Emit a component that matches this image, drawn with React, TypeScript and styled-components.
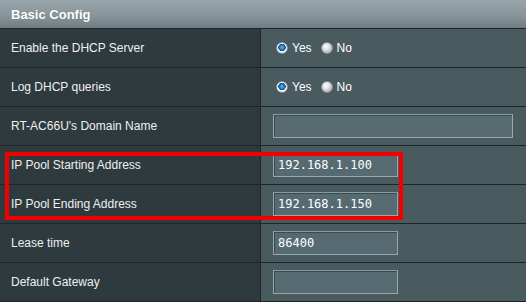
import React from "react";
import styled, { createGlobalStyle } from "styled-components";

const Global = createGlobalStyle`
  html, body { margin: 0; padding: 0; background: #4a5b60; }
  body { width: 526px; height: 302px; overflow: hidden; }
`;

const Panel = styled.div`
  position: relative;
  width: 526px;
  font-family: Arial, "Liberation Sans", sans-serif;
`;

const Header = styled.div`
  height: 28px;
  border-bottom: 1px solid #1c2326;
  background: linear-gradient(to bottom, #97a4a9 0%, #8a979c 50%, #6f7d82 100%);
  display: flex;
  align-items: center;
  padding-left: 11px;
  color: #ffffff;
  font-weight: bold;
  font-size: 13px;
  text-shadow: 0 0 1px rgba(0,0,0,0.25);
`;

const Row = styled.div`
  display: grid;
  grid-template-columns: 261px 1fr;
  height: 38px;
  border-bottom: 1px solid #1e2528;
`;

const Label = styled.div`
  background: #2f3a3e;
  border-right: 1px solid #1e2528;
  display: flex;
  align-items: center;
  padding-left: 11px;
  color: #eef0f0;
  font-size: 12px;
`;

const Field = styled.div<{ $pad?: number }>`
  background: #4a5b60;
  display: flex;
  align-items: center;
  padding-left: ${(p) => p.$pad ?? 12}px;
  color: #ffffff;
  font-size: 12px;
`;

const RadioOpt = styled.label`
  display: flex;
  align-items: center;
  gap: 4px;
  margin-right: 9px;
`;

const RadioDot = styled.span<{ $on?: boolean }>`
  width: 12px;
  height: 12px;
  border-radius: 50%;
  box-sizing: border-box;
  border: 1px solid #8a9599;
  background: ${(p) =>
    p.$on
      ? "radial-gradient(circle at 50% 45%, #5fb8ef 0, #1a75b8 2.5px, #0d4f86 3.5px, #ffffff 4px, #e9eef0 5px)"
      : "radial-gradient(circle at 40% 35%, #ffffff 0, #e4e6e7 3px, #b9bdbf 6px)"};
  box-shadow: 0 0 1px rgba(0,0,0,0.4);
`;

const TextBox = styled.div<{ $w: number }>`
  width: ${(p) => p.$w}px;
  height: 24px;
  box-sizing: border-box;
  background: #566b71;
  border: 1px solid #9aa8ac;
  border-top-color: #8d9b9f;
  box-shadow: inset 1px 1px 0 #3b4a4f;
  display: flex;
  align-items: center;
  padding-left: 4px;
  font-family: "DejaVu Sans Mono", "Liberation Mono", monospace;
  font-size: 12px;
  color: #ffffff;
`;

const Highlight = styled.div`
  position: absolute;
  left: 5px;
  top: 152px;
  width: 398px;
  height: 68px;
  box-sizing: border-box;
  border: 4px solid #f20000;
  pointer-events: none;
`;

type RowDef =
  | { label: string; kind: "radio" }
  | { label: string; kind: "input"; value: string; w: number };

const rows: RowDef[] = [
  { label: "Enable the DHCP Server", kind: "radio" },
  { label: "Log DHCP queries", kind: "radio" },
  { label: "RT-AC66U's Domain Name", kind: "input", value: "", w: 240 },
  { label: "IP Pool Starting Address", kind: "input", value: "192.168.1.100", w: 125 },
  { label: "IP Pool Ending Address", kind: "input", value: "192.168.1.150", w: 125 },
  { label: "Lease time", kind: "input", value: "86400", w: 125 },
  { label: "Default Gateway", kind: "input", value: "", w: 125 },
];

export default function App() {
  return (
    <>
      <Global />
      <Panel>
        <Header>Basic Config</Header>
        {rows.map((r) => (
          <Row key={r.label}>
            <Label>{r.label}</Label>
            {r.kind === "radio" ? (
              <Field $pad={15}>
                <RadioOpt>
                  <RadioDot $on />
                  Yes
                </RadioOpt>
                <RadioOpt>
                  <RadioDot />
                  No
                </RadioOpt>
              </Field>
            ) : (
              <Field>
                <TextBox $w={r.w}>{r.value}</TextBox>
              </Field>
            )}
          </Row>
        ))}
        <Highlight />
      </Panel>
    </>
  );
}
